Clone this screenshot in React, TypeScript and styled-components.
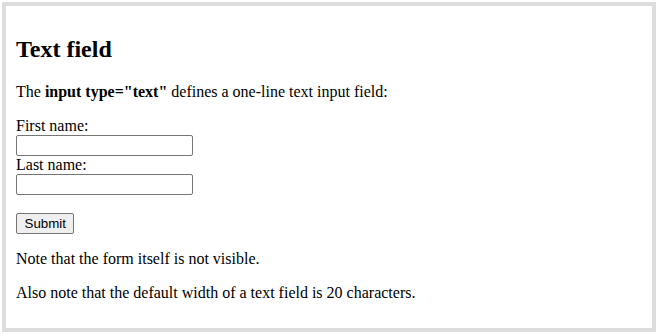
import React from "react";
import styled, { createGlobalStyle } from "styled-components";

const GlobalStyle = createGlobalStyle`
  html, body {
    margin: 0;
    padding: 0;
    background: #ffffff;
  }
`;

const Frame = styled.div`
  box-sizing: border-box;
  width: 654px;
  height: 330px;
  margin: 2px;
  border: 4px solid #dddddd;
  padding: 10px;
  overflow: hidden;
  background: #ffffff;
  color: #000000;
  font-family: "Liberation Serif", "Times New Roman", serif;
  font-size: 16px;
`;

const Heading = styled.h2`
  font-size: 24px;
  font-weight: bold;
  margin: 19.92px 0;
`;

const Paragraph = styled.p`
  margin: 16px 0;
`;

const Form = styled.form`
  margin: 0;
`;

const Label = styled.label`
  cursor: default;
`;

const TextInput = styled.input`
  box-sizing: border-box;
  width: 177px;
  height: 21px;
  margin: 0;
  padding: 1px 2px;
  border: 1px solid #767676;
  border-radius: 2px;
  background: #ffffff;
  font-family: "Liberation Sans", Arial, sans-serif;
  font-size: 13.333px;
`;

const SubmitButton = styled.input`
  box-sizing: border-box;
  height: 21px;
  margin: 0;
  padding: 1px 7.5px;
  border: 1px solid #767676;
  border-radius: 2px;
  background: #efefef;
  color: #000000;
  font-family: "Liberation Sans", Arial, sans-serif;
  font-size: 13.333px;
`;

export default function App() {
  return (
    <>
      <GlobalStyle />
      <Frame>
        <Heading>Text field</Heading>
        <Paragraph>
          The <strong>input type="text"</strong> defines a one-line text input
          field:
        </Paragraph>
        <Form onSubmit={(e) => e.preventDefault()}>
          <Label htmlFor="fname">First name:</Label>
          <br />
          <TextInput type="text" id="fname" name="fname" />
          <br />
          <Label htmlFor="lname">Last name:</Label>
          <br />
          <TextInput type="text" id="lname" name="lname" />
          <br />
          <br />
          <SubmitButton type="submit" value="Submit" />
        </Form>
        <Paragraph>Note that the form itself is not visible.</Paragraph>
        <Paragraph>
          Also note that the default width of a text field is 20 characters.
        </Paragraph>
      </Frame>
    </>
  );
}
